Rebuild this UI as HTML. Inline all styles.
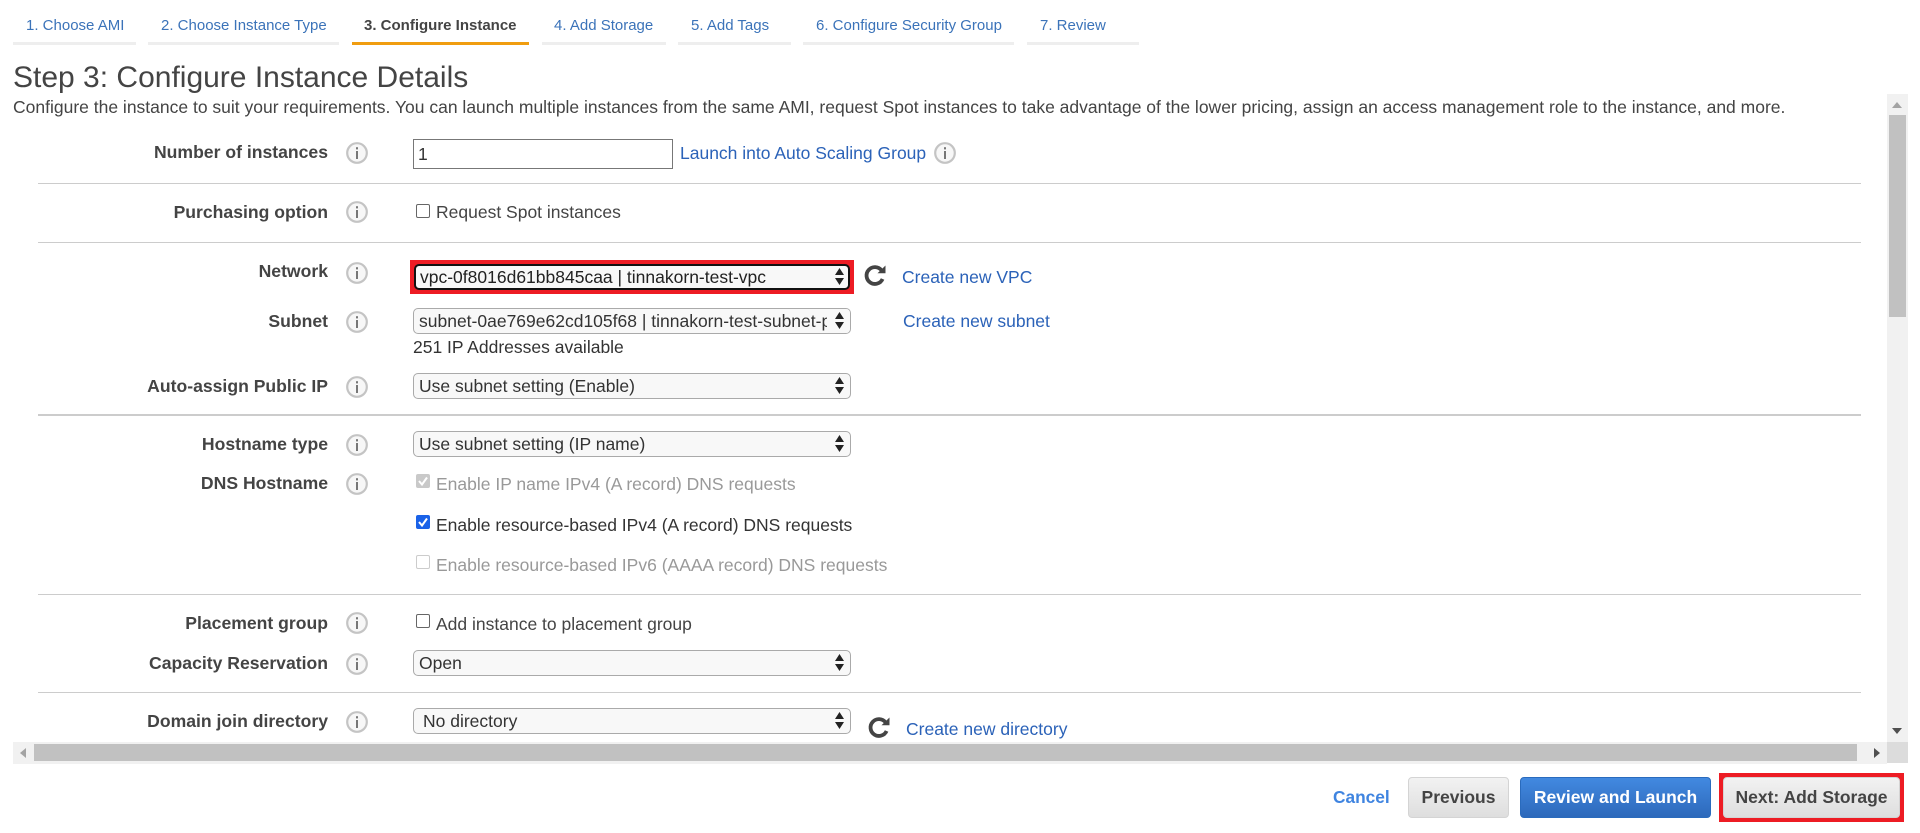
<!DOCTYPE html>
<html lang="en"><head><meta charset="utf-8"><title>Step 3: Configure Instance Details</title>
<style>
html,body{margin:0;padding:0;background:#fff;width:1920px;height:833px;overflow:hidden}
body{position:relative;font-family:"Liberation Sans",Arial,sans-serif;font-size:17.5px;color:#444}
.a{position:absolute}
.t{position:absolute;white-space:nowrap;line-height:20px;height:20px}
.l{position:absolute;white-space:nowrap;line-height:20px;height:20px;right:1592px;font-weight:bold;color:#444;font-size:17.6px}
.k{color:#2b62b8}
.tab{position:absolute;top:42px;height:3px;background:#eee}
.tt{position:absolute;top:16px;white-space:nowrap;line-height:20px;font-size:15px;color:#3b73b9}
.hr{position:absolute;left:38px;width:1823px;height:1px;background:#ccc}
.sel{position:absolute;left:413px;width:436px;height:24px;border:1px solid #aaa;border-radius:5px;background:#f8f8f8;line-height:25px;color:#333;white-space:nowrap;overflow:hidden}
.sel span{position:absolute;left:5px;top:0}
.sel svg{position:absolute;right:5px;top:3px}
.cb{position:absolute;left:416px;width:12px;height:12px;border:1px solid #666;border-radius:2px;background:#fff}
.btn{position:absolute;top:777px;height:39px;border:1px solid #d4d4d4;border-radius:4px;font-weight:bold;line-height:38px;text-align:center;background:linear-gradient(#f2f2f2,#dedede);color:#444;white-space:nowrap;font-size:17.5px}
</style></head><body>
<svg width="0" height="0" style="position:absolute"><defs>
<g id="i"><circle cx="11" cy="11" r="9.8" fill="#f7f7f7" stroke="#c4c4c4" stroke-width="2.2"/><rect x="10" y="9" width="2" height="8" fill="#777"/><rect x="10" y="5.2" width="2" height="2.2" fill="#777"/></g>
<g id="ar"><path d="M5.5 0 L10 7 L1 7Z M1 10 L10 10 L5.5 17Z" fill="#222"/></g>
<g id="r"><path d="M17.6 6.4 A8.4 8.4 0 1 0 18.6 15" fill="none" stroke="#444" stroke-width="3.8"/><path d="M13.5 9.2 L21.5 9.2 L21.5 1.5Z" fill="#444"/></g>
</defs></svg>

<div class="tab" style="left:13px;width:123px"></div>
<div class="tab" style="left:148px;width:191px"></div>
<div class="tab" style="left:352px;width:177px;background:#f09d10"></div>
<div class="tab" style="left:542px;width:124px"></div>
<div class="tab" style="left:678px;width:113px"></div>
<div class="tab" style="left:803px;width:211px"></div>
<div class="tab" style="left:1027px;width:112px"></div>
<span class="tt" style="left:26px">1. Choose AMI</span>
<span class="tt" style="left:161px">2. Choose Instance Type</span>
<span class="tt" style="left:364px;font-weight:bold;color:#444">3. Configure Instance</span>
<span class="tt" style="left:554px">4. Add Storage</span>
<span class="tt" style="left:691px">5. Add Tags</span>
<span class="tt" style="left:816px">6. Configure Security Group</span>
<span class="tt" style="left:1040px">7. Review</span>

<div class="t" style="left:13px;top:60px;font-size:30px;line-height:36px;height:36px">Step 3: Configure Instance Details</div>
<div class="t" style="left:13px;top:97px">Configure the instance to suit your requirements. You can launch multiple instances from the same AMI, request Spot instances to take advantage of the lower pricing, assign an access management role to the instance, and more.</div>

<div class="l" style="top:142px">Number of instances</div>
<svg class="a" style="left:346px;top:142px" width="22" height="22"><use href="#i"/></svg>
<div class="a" style="left:413px;top:139px;width:258px;height:28px;border:1px solid #777;background:#fff;line-height:28px;color:#333"><span style="margin-left:4px">1</span></div>
<div class="t k" style="left:680px;top:143px">Launch into Auto Scaling Group</div>
<svg class="a" style="left:934px;top:142px" width="22" height="22"><use href="#i"/></svg>
<div class="hr" style="top:183px"></div>

<div class="l" style="top:202px">Purchasing option</div>
<svg class="a" style="left:346px;top:201px" width="22" height="22"><use href="#i"/></svg>
<div class="cb" style="top:204px"></div>
<div class="t" style="left:436px;top:202px">Request Spot instances</div>
<div class="hr" style="top:242px"></div>

<div class="l" style="top:261px">Network</div>
<svg class="a" style="left:346px;top:262px" width="22" height="22"><use href="#i"/></svg>
<div class="a" style="left:410px;top:260px;width:444px;height:34px;background:#ed1c24"></div>
<div class="sel" style="top:264px;height:22px;line-height:23px;border:2px solid #111;width:432px;left:414px;border-radius:5px;color:#222"><span style="left:4px">vpc-0f8016d61bb845caa | tinnakorn-test-vpc</span><svg width="11" height="17" style="top:2px;right:3px"><use href="#ar"/></svg></div>
<svg class="a" style="left:864px;top:264px" width="23" height="23"><use href="#r"/></svg>
<div class="t k" style="left:902px;top:267px">Create new VPC</div>

<div class="l" style="top:311px">Subnet</div>
<svg class="a" style="left:346px;top:311px" width="22" height="22"><use href="#i"/></svg>
<div class="sel" style="top:308px"><span>subnet-0ae769e62cd105f68 | tinnakorn-test-subnet-p</span><i class="a" style="right:0;top:0;width:23px;height:25px;background:#f8f8f8"></i><svg width="11" height="17"><use href="#ar"/></svg></div>
<div class="t k" style="left:903px;top:311px">Create new subnet</div>
<div class="t" style="left:413px;top:337px;color:#333">251 IP Addresses available</div>

<div class="l" style="top:376px">Auto-assign Public IP</div>
<svg class="a" style="left:346px;top:376px" width="22" height="22"><use href="#i"/></svg>
<div class="sel" style="top:373px"><span>Use subnet setting (Enable)</span><svg width="11" height="17"><use href="#ar"/></svg></div>
<div class="hr" style="top:414px;height:2px"></div>

<div class="l" style="top:434px">Hostname type</div>
<svg class="a" style="left:346px;top:434px" width="22" height="22"><use href="#i"/></svg>
<div class="sel" style="top:431px"><span>Use subnet setting (IP name)</span><svg width="11" height="17"><use href="#ar"/></svg></div>

<div class="l" style="top:473px">DNS Hostname</div>
<svg class="a" style="left:346px;top:473px" width="22" height="22"><use href="#i"/></svg>
<svg class="a" style="left:416px;top:474px" width="15" height="15"><rect x="0" y="0" width="14" height="14" rx="2" fill="#c9c9c9"/><path d="M3 7 L6 10.5 L11 3.5" fill="none" stroke="#fff" stroke-width="2"/></svg>
<div class="t" style="left:436px;top:474px;color:#999">Enable IP name IPv4 (A record) DNS requests</div>
<svg class="a" style="left:416px;top:515px" width="15" height="15"><rect x="0" y="0" width="14" height="14" rx="2" fill="#1a62e8"/><path d="M3 7 L6 10.5 L11 3.5" fill="none" stroke="#fff" stroke-width="2"/></svg>
<div class="t" style="left:436px;top:515px;color:#333">Enable resource-based IPv4 (A record) DNS requests</div>
<div class="cb" style="top:555px;border-color:#ccc"></div>
<div class="t" style="left:436px;top:555px;color:#999">Enable resource-based IPv6 (AAAA record) DNS requests</div>
<div class="hr" style="top:594px"></div>

<div class="l" style="top:613px">Placement group</div>
<svg class="a" style="left:346px;top:612px" width="22" height="22"><use href="#i"/></svg>
<div class="cb" style="top:614px"></div>
<div class="t" style="left:436px;top:614px">Add instance to placement group</div>

<div class="l" style="top:653px">Capacity Reservation</div>
<svg class="a" style="left:346px;top:653px" width="22" height="22"><use href="#i"/></svg>
<div class="sel" style="top:650px"><span>Open</span><svg width="11" height="17"><use href="#ar"/></svg></div>
<div class="hr" style="top:692px"></div>

<div class="l" style="top:711px">Domain join directory</div>
<svg class="a" style="left:346px;top:711px" width="22" height="22"><use href="#i"/></svg>
<div class="sel" style="top:708px"><span style="left:9px">No directory</span><svg width="11" height="17"><use href="#ar"/></svg></div>
<svg class="a" style="left:868px;top:716px" width="23" height="23"><use href="#r"/></svg>
<div class="t k" style="left:906px;top:719px">Create new directory</div>

<!-- scrollbars -->
<div class="a" style="left:1887px;top:94px;width:21px;height:648px;background:#f1f1f1"></div>
<div class="a" style="left:1889px;top:115px;width:17px;height:202px;background:#c1c1c1"></div>
<svg class="a" style="left:1892px;top:101px" width="10" height="8"><path d="M5 1 L10 7 L0 7Z" fill="#a3a3a3"/></svg>
<svg class="a" style="left:1892px;top:727px" width="10" height="7"><path d="M0 1 L10 1 L5 7Z" fill="#505050"/></svg>
<div class="a" style="left:13px;top:742px;width:1874px;height:22px;background:#f1f1f1"></div>
<div class="a" style="left:34px;top:744px;width:1823px;height:17px;background:#c1c1c1"></div>
<svg class="a" style="left:20px;top:748px" width="7" height="10"><path d="M6 0 L6 10 L0 5Z" fill="#a3a3a3"/></svg>
<svg class="a" style="left:1873px;top:748px" width="7" height="10"><path d="M1 0 L1 10 L7 5Z" fill="#505050"/></svg>
<div class="a" style="left:1887px;top:742px;width:21px;height:21px;background:#dcdcdc"></div>

<!-- footer -->
<div class="t" style="left:1333px;top:787px;font-weight:bold;color:#3f84e0;font-size:17.3px">Cancel</div>
<div class="btn" style="left:1408px;width:99px">Previous</div>
<div class="btn" style="left:1520px;width:189px;border-color:#2a6bbd;color:#fff;background:linear-gradient(#4289e0,#2d69bb)">Review and Launch</div>
<div class="a" style="left:1719px;top:773px;width:185px;height:49px;background:#ed1c24"></div>
<div class="btn" style="left:1723px;width:175px">Next: Add Storage</div>
</body></html>
